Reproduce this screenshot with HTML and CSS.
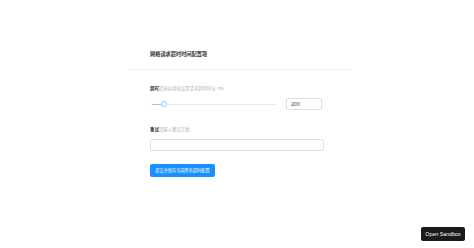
FILE: index.html
```html
<!DOCTYPE html>
<html lang="zh-CN">
<head>
<meta charset="utf-8">
<title>超时配置</title>
<link rel="stylesheet" href="styles.css">
</head>
<body>
<div class="page">
  <div class="card">
    <div class="card-head">网络请求超时时间配置项</div>
    <div class="card-body">
      <div class="label"><span class="strong">超时</span><span class="hint">请拖动滑块设置请求超时时长</span><span class="unit">ms</span></div>
      <div class="slider-row">
        <div class="slider">
          <div class="rail"></div>
          <div class="track" style="width: 10%"></div>
          <div class="handle" style="left: 10%"></div>
        </div>
        <div class="num-input">200</div>
      </div>
      <div class="label label-2"><span class="strong">重试</span><span class="hint">请输入重试次数：</span></div>
      <div class="text-input"></div>
      <button class="btn">提交并保存当前所有超时配置</button>
    </div>
  </div>
</div>
<button class="sandbox">Open Sandbox</button>
</body>
</html>
```
FILE: styles.css
```css
html, body {
  margin: 0;
  padding: 0;
  background: #ffffff;
  font-family: "Noto Sans", "Noto Sans CJK SC", sans-serif;
}
.page {
  padding-top: 50px;
}
.card {
  margin-left: 128px;
  width: 224px;
}
.card-head {
  padding-left: 22px;
  font-size: 5.2px;
  line-height: 8px;
  font-weight: 700;
  color: #333333;
  padding-bottom: 11px;
  border-bottom: 1px solid #f0f0f0;
}
.card-body {
  padding-left: 22px;
  width: 174px;
}
.label {
  margin-top: 14px;
  height: 8px;
  line-height: 8px;
  font-size: 4.4px;
  display: flex;
  align-items: center;
  white-space: nowrap;
}
.label-2 {
  margin-top: 15px;
}
.strong {
  color: #333333;
  font-weight: 700;
}
.hint {
  color: #b5b5b5;
}
.unit {
  color: #b5b5b5;
  margin-left: 1.5px;
}
.slider-row {
  margin-top: 6px;
  height: 12px;
  display: flex;
  align-items: center;
  gap: 8px;
}
.slider {
  position: relative;
  flex: 1;
  height: 12px;
  margin: 0 2px;
}
.rail {
  position: absolute;
  left: 0;
  right: 0;
  top: 5.5px;
  height: 1px;
  background: #e8e8e8;
}
.track {
  position: absolute;
  left: 0;
  top: 5.5px;
  height: 1px;
  background: #91caff;
}
.handle {
  position: absolute;
  top: 3px;
  width: 4px;
  height: 4px;
  margin-left: -3px;
  border: 1px solid #91caff;
  border-radius: 50%;
  background: #ffffff;
}
.num-input {
  width: 36px;
  height: 12px;
  margin-right: 2px;
  box-sizing: border-box;
  border: 1px solid #e0e0e0;
  border-radius: 2px;
  font-size: 5px;
  line-height: 10px;
  padding-left: 4px;
  color: #333333;
}
.text-input {
  margin-top: 6px;
  height: 12px;
  box-sizing: border-box;
  border: 1px solid #e0e0e0;
  border-radius: 2px;
}
.btn {
  display: block;
  margin-top: 13px;
  width: 65px;
  height: 13px;
  padding: 0;
  border: none;
  border-radius: 2px;
  background: #1890ff;
  color: #ffffff;
  font-family: "Noto Sans", "Noto Sans CJK SC", sans-serif;
  font-size: 4.2px;
  line-height: 13px;
  text-align: center;
}
.sandbox {
  position: fixed;
  right: 9px;
  bottom: 7px;
  width: 44px;
  height: 14px;
  padding: 0;
  border: none;
  border-radius: 2px;
  background: #1a1a1a;
  color: #ffffff;
  font-family: "Liberation Sans", Arial, sans-serif;
  font-size: 5.3px;
  line-height: 14px;
  text-align: center;
}
```
